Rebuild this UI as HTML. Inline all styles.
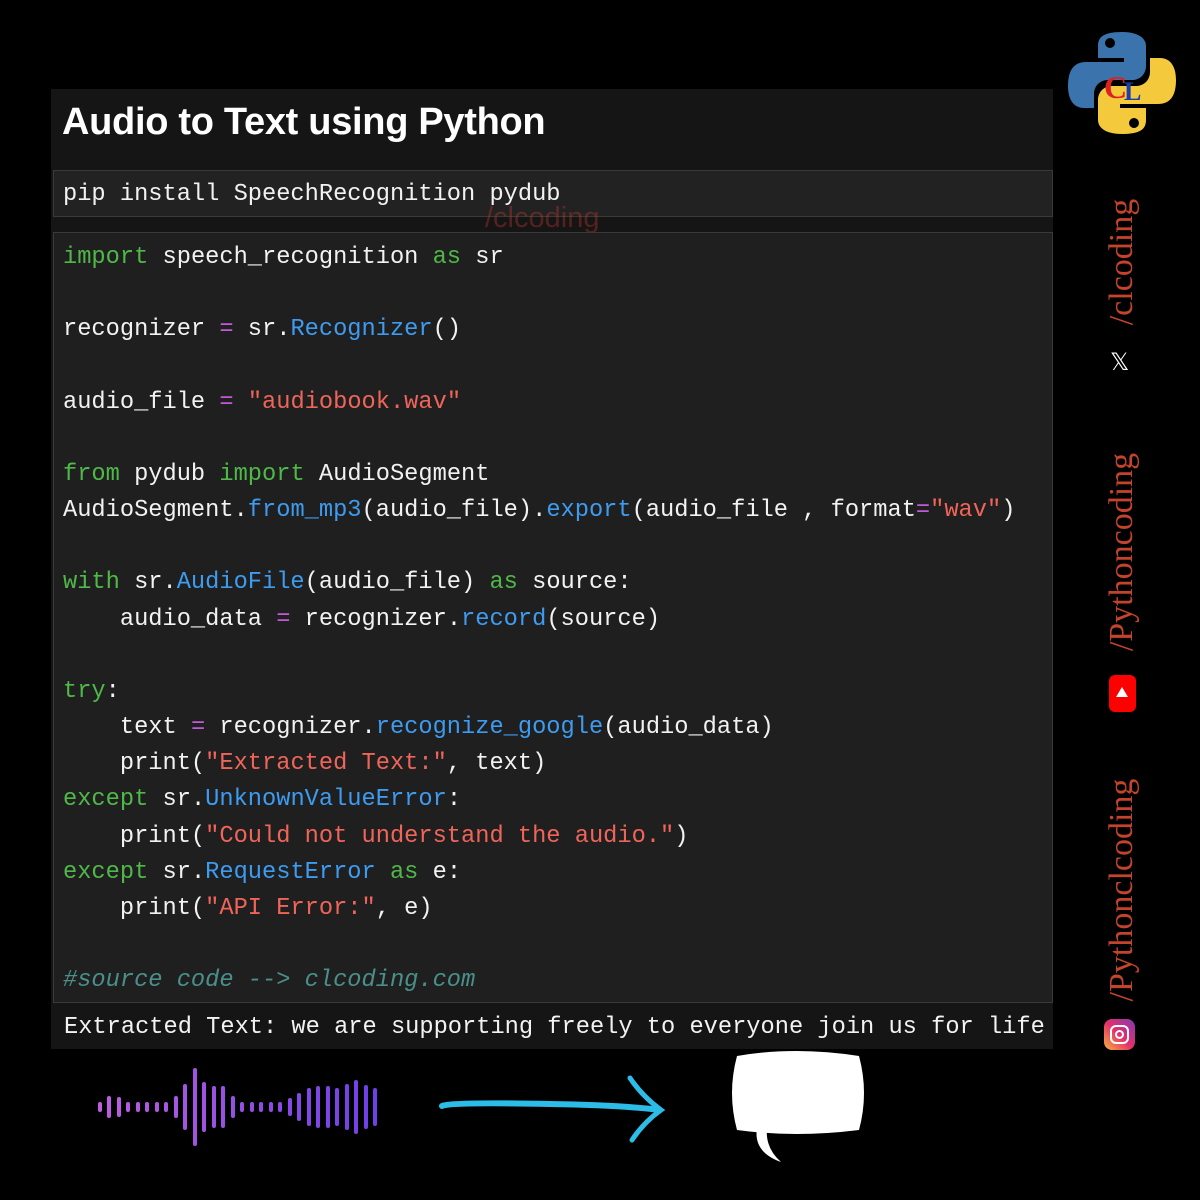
<!DOCTYPE html>
<html><head><meta charset="utf-8"><style>
*{margin:0;padding:0;box-sizing:border-box}
body{width:1200px;height:1200px;background:#000;position:relative;overflow:hidden;font-family:"Liberation Sans",sans-serif}
.panel{position:absolute;left:51px;top:89px;width:1002px;height:960px;background:#151515}
.title{position:absolute;left:62px;top:101px;font-size:38px;font-weight:bold;color:#fff;letter-spacing:-0.3px}
.pip{position:absolute;left:53px;top:170px;width:1000px;height:47px;background:#222;border:1px solid #3a3a3a}
.code{position:absolute;left:53px;top:232px;width:1000px;height:771px;background:#1f1f1f;border:1px solid #3a3a3a}
.mono{font-family:"Liberation Mono",monospace;font-size:23.7px;color:#f2f2f2;white-space:pre}
pre{position:absolute;left:63px;top:240px;line-height:36.15px}
.k{color:#4fb848}.f{color:#3d9bf0}.s{color:#f0645a}.o{color:#c25ad8}.c{color:#4a8f8a;font-style:italic}
.out{position:absolute;left:64px;top:1014px}
.side{position:absolute;width:0;height:0}
.side span{position:absolute;left:0;top:0;font-family:"Liberation Serif",serif;font-size:34px;color:#c4432c;transform:translate(-50%,-50%) rotate(-90deg);white-space:nowrap}
.wm{position:absolute;left:485px;top:202px;font-size:29px;color:rgba(200,60,50,.35);font-family:"Liberation Sans",sans-serif}
</style></head><body>
<div class="panel"></div>
<div class="title">Audio to Text using Python</div>
<div class="pip"></div>
<div class="mono" style="position:absolute;left:63px;top:180px;line-height:30px">pip install SpeechRecognition pydub</div>
<div class="wm">/clcoding</div>
<div class="code"></div>
<pre class="mono"><span class="k">import</span> speech_recognition <span class="k">as</span> sr

recognizer <span class="o">=</span> sr.<span class="f">Recognizer</span>()

audio_file <span class="o">=</span> <span class="s">"audiobook.wav"</span>

<span class="k">from</span> pydub <span class="k">import</span> AudioSegment
AudioSegment.<span class="f">from_mp3</span>(audio_file).<span class="f">export</span>(audio_file , format<span class="o">=</span><span class="s">"wav"</span>)

<span class="k">with</span> sr.<span class="f">AudioFile</span>(audio_file) <span class="k">as</span> source:
    audio_data <span class="o">=</span> recognizer.<span class="f">record</span>(source)

<span class="k">try</span>:
    text <span class="o">=</span> recognizer.<span class="f">recognize_google</span>(audio_data)
    print(<span class="s">"Extracted Text:"</span>, text)
<span class="k">except</span> sr.<span class="f">UnknownValueError</span>:
    print(<span class="s">"Could not understand the audio."</span>)
<span class="k">except</span> sr.<span class="f">RequestError</span> <span class="k">as</span> e:
    print(<span class="s">"API Error:"</span>, e)

<span class="c">#source code --&gt; clcoding.com</span></pre>
<div class="mono out">Extracted Text: we are supporting freely to everyone join us for life</div>

<!-- python logo -->
<svg style="position:absolute;left:1066px;top:30px" width="112" height="106" viewBox="0 0 112 106">
<path d="M56 2 C36 2 32 8 32 16 L32 28 L58 28 L58 32 L20 32 C8 32 2 40 2 56 C2 70 8 78 18 78 L28 78 L28 64 C28 56 34 50 42 50 L66 50 C74 50 80 44 80 36 L80 16 C80 8 72 2 56 2 Z" fill="#3b74ac"/>
<path d="M56 104 C76 104 80 98 80 90 L80 78 L54 78 L54 74 L92 74 C104 74 110 66 110 50 C110 36 104 28 94 28 L84 28 L84 42 C84 50 78 56 70 56 L46 56 C38 56 32 62 32 70 L32 90 C32 98 40 104 56 104 Z" fill="#f5c93c"/>
<circle cx="44" cy="13" r="5" fill="#000"/><circle cx="68" cy="93" r="5" fill="#000"/>
<text x="38" y="68" font-family="Liberation Serif,serif" font-size="32" font-weight="bold" fill="#d22">C</text>
<text x="58" y="70" font-family="Liberation Serif,serif" font-size="26" font-weight="bold" fill="#1a3fb0">L</text>
</svg>

<div class="side" style="left:1122px;top:262px"><span>/clcoding</span></div>
<div style="position:absolute;left:1110px;top:348px;color:#fff;font-size:24px;font-family:'DejaVu Sans',sans-serif">𝕏</div>
<div class="side" style="left:1122px;top:552px"><span>/Pythoncoding</span></div>
<div style="position:absolute;left:1109px;top:675px;width:27px;height:37px;background:#f00;border-radius:6px"></div>
<div style="position:absolute;left:1116px;top:687px;width:0;height:0;border-left:6px solid transparent;border-right:6px solid transparent;border-bottom:10px solid #fff"></div>
<div class="side" style="left:1122px;top:890px"><span>/Pythonclcoding</span></div>
<div style="position:absolute;left:1104px;top:1019px;width:31px;height:31px;border-radius:8px;background:linear-gradient(45deg,#fbb03b,#e1306c 50%,#833ab4)"></div>
<div style="position:absolute;left:1110px;top:1025px;width:19px;height:19px;border:2.5px solid #fff;border-radius:6px"></div>
<div style="position:absolute;left:1115px;top:1030px;width:9px;height:9px;border:2.5px solid #fff;border-radius:50%"></div>

<!-- waveform -->
<svg style="position:absolute;left:90px;top:1060px" width="300" height="95">
<defs><linearGradient id="g" gradientUnits="userSpaceOnUse" x1="0" y1="0" x2="300" y2="0"><stop offset="0" stop-color="#c05ee0"/><stop offset="1" stop-color="#6a3ee8"/></linearGradient></defs>
<g stroke="url(#g)" stroke-width="4" stroke-linecap="round">
<line x1="10" y1="44" x2="10" y2="50"/><line x1="19" y1="38" x2="19" y2="56"/><line x1="29" y1="39" x2="29" y2="55"/><line x1="38" y1="44" x2="38" y2="50"/><line x1="48" y1="44" x2="48" y2="50"/><line x1="57" y1="44" x2="57" y2="50"/><line x1="67" y1="44" x2="67" y2="50"/><line x1="76" y1="44" x2="76" y2="50"/><line x1="86" y1="38" x2="86" y2="56"/><line x1="95" y1="26" x2="95" y2="68"/><line x1="105" y1="10" x2="105" y2="84"/><line x1="114" y1="24" x2="114" y2="70"/><line x1="124" y1="28" x2="124" y2="66"/><line x1="133" y1="28" x2="133" y2="66"/><line x1="143" y1="38" x2="143" y2="56"/><line x1="152" y1="44" x2="152" y2="50"/><line x1="162" y1="44" x2="162" y2="50"/><line x1="171" y1="44" x2="171" y2="50"/><line x1="181" y1="44" x2="181" y2="50"/><line x1="190" y1="44" x2="190" y2="50"/><line x1="200" y1="40" x2="200" y2="54"/><line x1="209" y1="35" x2="209" y2="59"/><line x1="219" y1="30" x2="219" y2="64"/><line x1="228" y1="28" x2="228" y2="66"/><line x1="238" y1="28" x2="238" y2="66"/><line x1="247" y1="30" x2="247" y2="64"/><line x1="257" y1="26" x2="257" y2="68"/><line x1="266" y1="22" x2="266" y2="72"/><line x1="276" y1="27" x2="276" y2="67"/><line x1="285" y1="30" x2="285" y2="64"/>
</g></svg>

<!-- arrow -->
<svg style="position:absolute;left:430px;top:1070px" width="250" height="80">
<path d="M12 36 Q20 32 120 34 Q190 35 230 40" stroke="#2bbde8" stroke-width="6" fill="none" stroke-linecap="round"/>
<path d="M200 8 Q212 26 231 40 Q214 52 202 70" stroke="#2bbde8" stroke-width="5" fill="none" stroke-linecap="round"/>
</svg>

<!-- bubble -->
<svg style="position:absolute;left:725px;top:1048px" width="150" height="120">
<path d="M12 8 Q70 -2 134 8 Q144 45 134 82 Q70 90 12 82 Q2 45 12 8 Z" fill="#fff"/>
<path d="M32 80 Q28 104 56 114 Q40 100 42 80 Z" fill="#fff"/>
</svg>
</body></html>
